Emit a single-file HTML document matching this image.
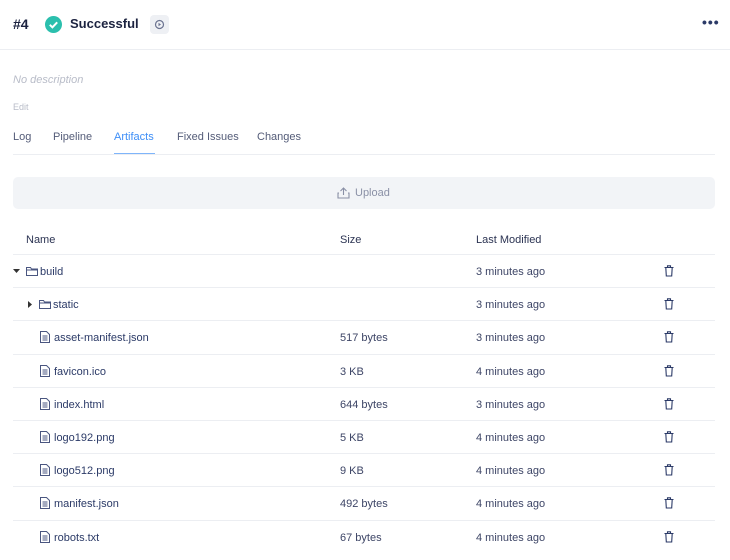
<!DOCTYPE html><html><head><style>
body{margin:0;width:730px;height:560px;overflow:hidden;background:#fff;font-family:"Liberation Sans",sans-serif;color:#1f2744;position:relative}
.a{position:absolute;white-space:nowrap}
.line{position:absolute;left:13px;width:702px;height:1px;background:#eceef2}
.row{position:absolute;left:13px;width:702px;height:33px;font-size:11px;color:#3d4566}
.row span{position:absolute;top:1px;line-height:33px}
.nm{color:#2b3a67}
</style></head><body>
<div class="a" style="left:13px;top:16px;font-size:14px;font-weight:bold;color:#1c2340">#4</div>
<svg class="a" style="left:45px;top:16px" width="17" height="17"><circle cx="8.5" cy="8.5" r="8.5" fill="#2bbfad"/><path d="M4.8 8.8l2.6 2.5 4.8-5" stroke="#fff" stroke-width="2" fill="none"/></svg>
<div class="a" style="left:70px;top:16px;font-size:13px;font-weight:bold;color:#1c2340">Successful</div>
<div class="a" style="left:150px;top:15px;width:19px;height:19px;background:#eef0f4;border-radius:4px"></div>
<svg class="a" style="left:154px;top:19px" width="11" height="11"><circle cx="5.5" cy="5.5" r="4" stroke="#6b7390" stroke-width="1.2" fill="none"/><path d="M4.5 3.8l2.5 1.7-2.5 1.7z" fill="#6b7390"/></svg>
<div class="a" style="left:702px;top:14px;font-size:14px;font-weight:bold;color:#2b3a67;letter-spacing:1px">•••</div>
<div class="line" style="left:0;width:730px;top:49px"></div>
<div class="a" style="left:13px;top:74px;font-size:11px;font-style:italic;color:#b8bcc8">No description</div>
<div class="a" style="left:13px;top:102px;font-size:9px;color:#b8bcc8">Edit</div>
<div class="a" style="left:13px;top:131px;font-size:11px;color:#545c78">Log</div>
<div class="a" style="left:53px;top:131px;font-size:11px;color:#545c78">Pipeline</div>
<div class="a" style="left:114px;top:131px;font-size:11px;color:#3d8ef7">Artifacts</div>
<div class="a" style="left:114px;top:153px;width:41px;height:2px;background:#7fb5fa"></div>
<div class="a" style="left:177px;top:131px;font-size:11px;color:#545c78">Fixed Issues</div>
<div class="a" style="left:257px;top:131px;font-size:11px;color:#545c78">Changes</div>
<div class="line" style="top:154px"></div>
<div class="a" style="left:13px;top:177px;width:702px;height:32px;background:#f2f4f7;border-radius:5px"></div>
<svg class="a" style="left:337px;top:186px" width="13" height="13"><path d="M6.5 9V2M3.5 5l3-3 3 3M2 7H1v5h11V7h-1" stroke="#8a90a6" stroke-width="1.1" fill="none"/></svg>
<div class="a" style="left:355px;top:187px;font-size:11px;color:#8a90a6">Upload</div>
<div class="a" style="left:26px;top:234px;font-size:11px;color:#2b3352">Name</div>
<div class="a" style="left:340px;top:234px;font-size:11px;color:#2b3352">Size</div>
<div class="a" style="left:476px;top:234px;font-size:11px;color:#2b3352">Last Modified</div>
<div id="rows"></div>
<script>
var d=[["build","","3 minutes ago",1,0],["static","","3 minutes ago",1,1],["asset-manifest.json","517 bytes","3 minutes ago",0],["favicon.ico","3 KB","4 minutes ago",0],["index.html","644 bytes","3 minutes ago",0],["logo192.png","5 KB","4 minutes ago",0],["logo512.png","9 KB","4 minutes ago",0],["manifest.json","492 bytes","4 minutes ago",0],["robots.txt","67 bytes","4 minutes ago",0]];
var h="",y=254;
d.forEach(function(r,i){
h+='<div class="line" style="top:'+y+'px"></div><div class="row" style="top:'+(y+1)+'px">';
var ix=r[3]?(r[4]?26:13):26;
if(r[3]){h+=r[4]?'<svg style="position:absolute;left:15px;top:13px" width="5" height="7"><path d="M0 0l4 3.5L0 7z" fill="#333"/></svg>':'<svg style="position:absolute;left:0;top:14px" width="7" height="5"><path d="M0 0h7L3.5 4z" fill="#333"/></svg>';
h+='<svg style="position:absolute;left:'+ix+'px;top:11px" width="12" height="10"><path d="M.5 1.5h4l1 1.5h6v6.5H.5zM.5 4h11" stroke="#4a5680" fill="none"/></svg>';}
else h+='<svg style="position:absolute;left:27px;top:10px" width="10" height="12"><path d="M.5.5h6l3 3v8H.5zM2.5 5h5M2.5 7h5M2.5 9h5" stroke="#4a5680" fill="none"/></svg>';
h+='<span class="nm" style="left:'+(r[3]?ix+14:41)+'px">'+r[0]+'</span><span style="left:327px">'+r[1]+'</span><span style="left:463px">'+r[2]+'</span>';
h+='<svg style="position:absolute;left:651px;top:10px" width="10" height="12"><path d="M.5 2.5h9M3.5 2.5V.8h3v1.7M1.8 2.5l.5 8.5h5.4l.5-8.5" stroke="#2b3a67" stroke-width="1.1" fill="none"/></svg></div>';
y+=33.2;});
document.getElementById("rows").innerHTML=h;
</script>
</body></html>
